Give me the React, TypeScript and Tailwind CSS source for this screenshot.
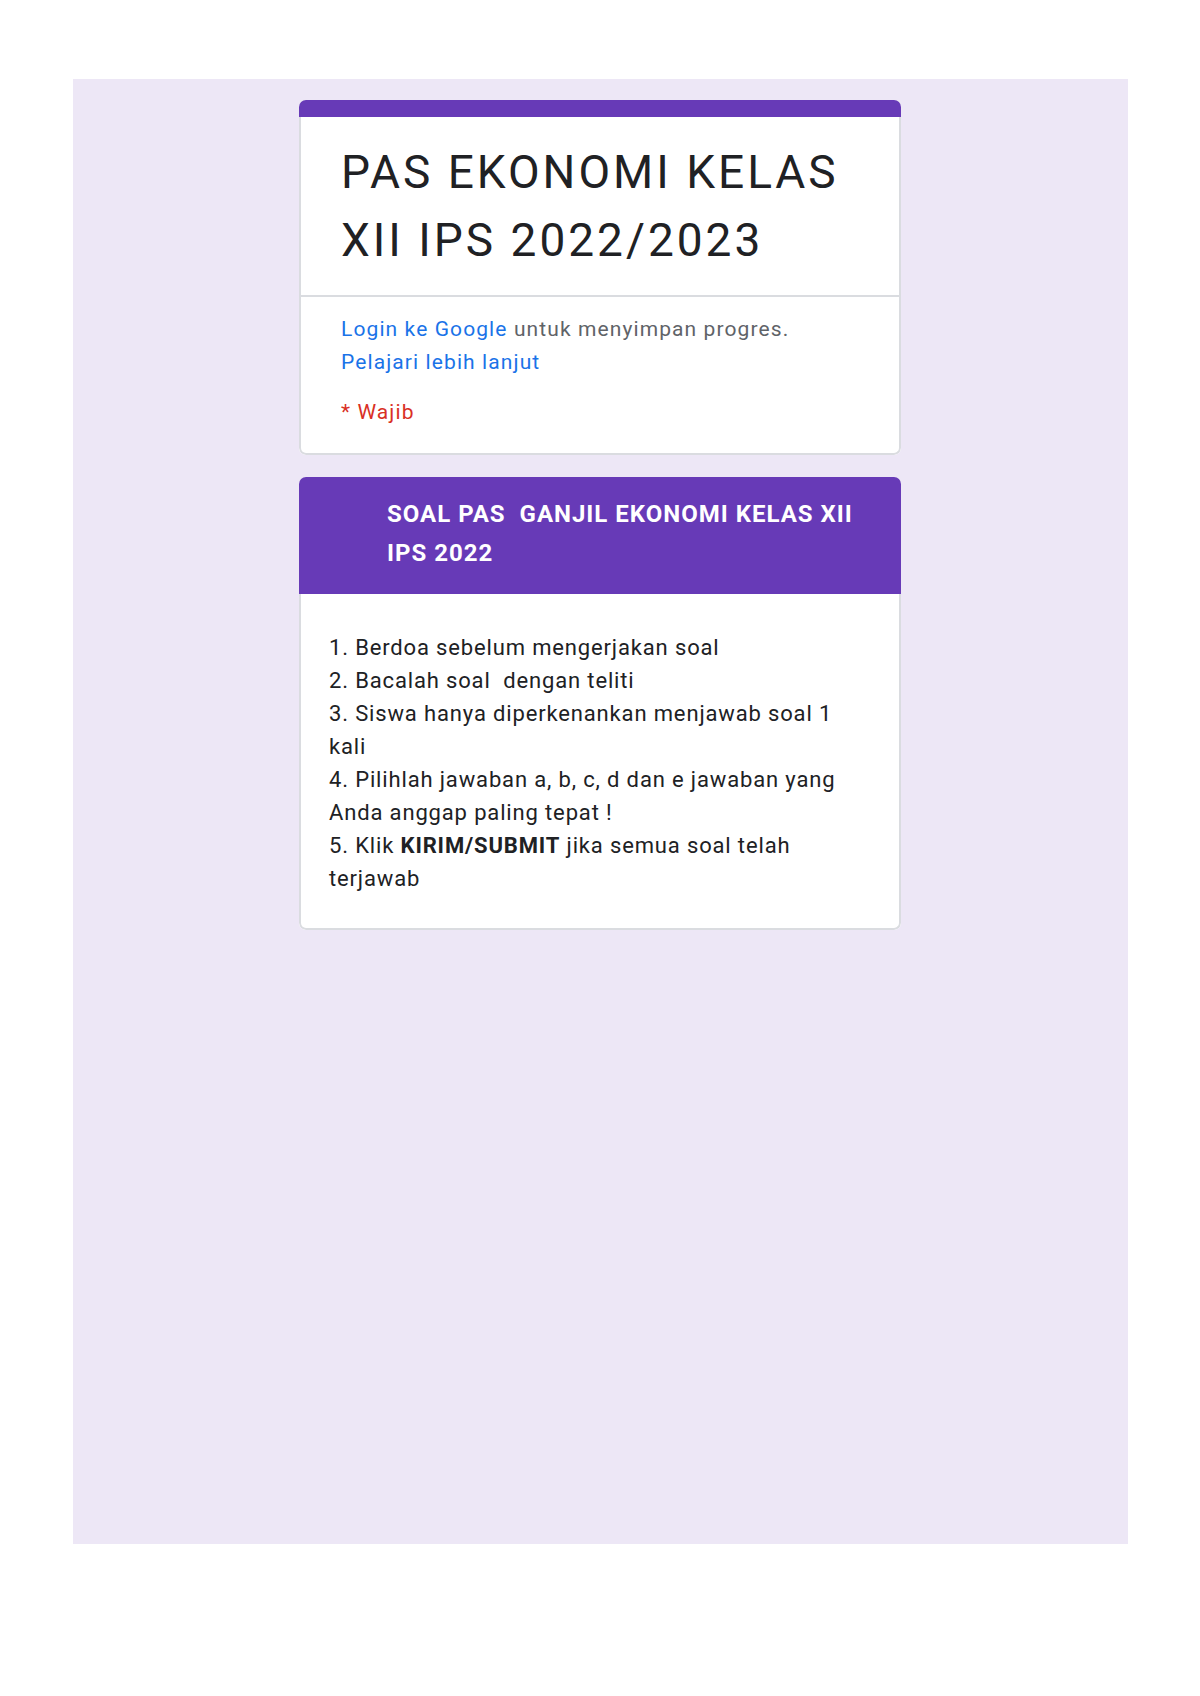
export default function App() {
  return (
    <div className="min-h-[1696px] bg-white pt-[79px]" style={{ fontFamily: "Roboto, 'Noto Sans', sans-serif" }}>
      <div className="mx-auto h-[1465px] w-[1055px] bg-[#ede7f6] pt-[21px]">
        <div className="mx-auto w-[602px]">
          {/* header card */}
          <div className="overflow-hidden rounded-[7px] bg-white">
            <div className="h-[17px] bg-[#673ab7]" />
            <div className="rounded-b-[7px] border-x-2 border-b-2 border-[#dadce0]">
              <h1 className="px-[40px] py-[21px] text-[46px] leading-[68px] font-normal tracking-[3px] text-[#202124]">
                PAS EKONOMI KELAS
                <br />
                XII IPS 2022/2023
              </h1>
              <div className="h-[2px] bg-[#dadce0]" />
              <div className="px-[40px] pt-[16px] pb-[24px] text-[21px] leading-[33px] tracking-[1.1px]">
                <p>
                  <span className="text-[#1a73e8]">Login ke Google</span>{" "}
                  <span className="text-[#5f6368]">untuk menyimpan progres.</span>
                </p>
                <p className="text-[#1a73e8]">Pelajari lebih lanjut</p>
                <p className="mt-[17px] text-[#d93025]">* Wajib</p>
              </div>
            </div>
          </div>

          {/* section card */}
          <div className="mt-[22px] overflow-hidden rounded-[7px] bg-white">
            <div className="bg-[#673ab7] pt-[18px] pr-[40px] pb-[21px] pl-[88px]">
              <h2 className="text-[24px] leading-[39px] font-bold tracking-[1px] whitespace-pre-wrap text-white">
                SOAL PAS  GANJIL EKONOMI KELAS XII IPS 2022
              </h2>
            </div>
            <div className="rounded-b-[7px] border-x-2 border-b-2 border-[#dadce0] px-[28px] pt-[37px] pb-[33px] text-[22px] leading-[33px] tracking-[0.85px] text-[#202124] whitespace-pre-wrap">
              <p>1. Berdoa sebelum mengerjakan soal</p>
              <p>2. Bacalah soal  dengan teliti</p>
              <p>3. Siswa hanya diperkenankan menjawab soal 1 kali</p>
              <p>4. Pilihlah jawaban a, b, c, d dan e jawaban yang Anda anggap paling tepat !</p>
              <p>
                5. Klik <span className="font-bold">KIRIM/SUBMIT</span> jika semua soal telah terjawab
              </p>
            </div>
          </div>
        </div>
      </div>
    </div>
  );
}
